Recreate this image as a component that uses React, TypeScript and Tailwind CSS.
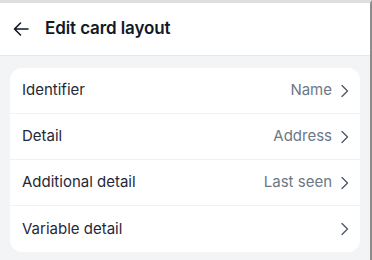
import React from "react";

const rows = [
  { label: "Identifier", value: "Name" },
  { label: "Detail", value: "Address" },
  { label: "Additional detail", value: "Last seen" },
  { label: "Variable detail", value: "" },
];

function Chevron() {
  return (
    <svg width="16" height="16" viewBox="0 0 16 16" fill="none" className="shrink-0">
      <path d="M6 2.5 L11.5 8 L6 13.5" stroke="#4b5563" strokeWidth="1.25" strokeLinecap="round" strokeLinejoin="round" />
    </svg>
  );
}

export default function App() {
  return (
    <div
      className="w-[372px] h-[260px] overflow-hidden bg-[#f3f4f6] border-t-[3px] border-t-[#dedede] border-r-2 border-r-[#8c8c8c] flex flex-col"
      style={{ fontFamily: "Inter, 'Noto Sans', sans-serif" }}
    >
      <div className="h-[53px] shrink-0 bg-white border-b border-[#e5e7eb] flex items-center pl-[12px] gap-[15px]">
        <svg width="18" height="18" viewBox="0 0 18 18" fill="none">
          <path d="M16 9 H2.5 M8.5 3 L2.5 9 L8.5 15" stroke="#111827" strokeWidth="1.6" strokeLinecap="round" strokeLinejoin="round" />
        </svg>
        <span className="text-[17px] font-semibold text-[#111827] tracking-[-0.1px]">Edit card layout</span>
      </div>
      <div className="px-[10px] pt-[12px]">
        <div className="bg-white rounded-[12px] flex flex-col">
          {rows.map((r, i) => (
            <div
              key={r.label}
              className={`h-[46px] flex items-center justify-between pl-[12px] pr-[8px] ${i < rows.length - 1 ? "border-b border-[#f1f2f4]" : ""}`}
            >
              <span className="text-[15px] text-[#1f2937]">{r.label}</span>
              <div className="flex items-center gap-[4px]">
                <span className="text-[15px] text-[#6b7885]">{r.value}</span>
                <Chevron />
              </div>
            </div>
          ))}
        </div>
      </div>
    </div>
  );
}
